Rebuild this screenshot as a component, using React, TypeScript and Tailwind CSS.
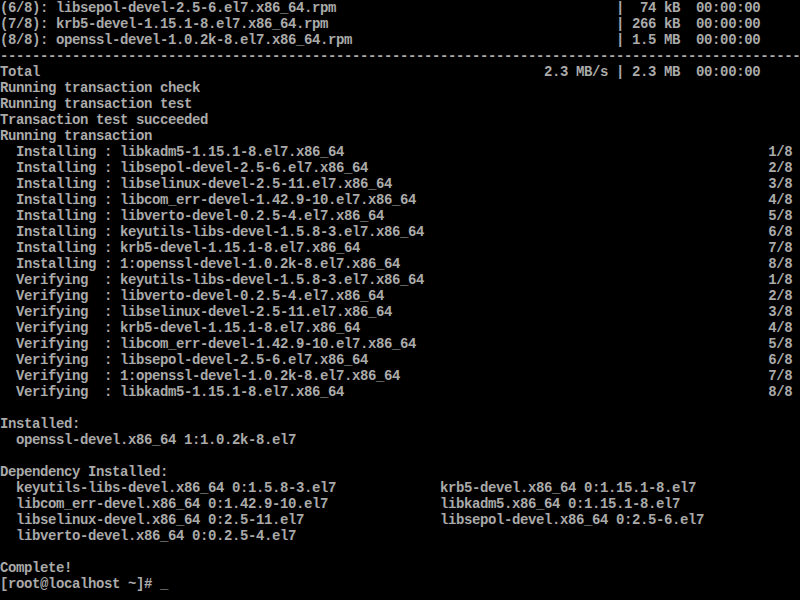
import React from "react";

const pkgs = [
  "libkadm5-1.15.1-8.el7.x86_64",
  "libsepol-devel-2.5-6.el7.x86_64",
  "libselinux-devel-2.5-11.el7.x86_64",
  "libcom_err-devel-1.42.9-10.el7.x86_64",
  "libverto-devel-0.2.5-4.el7.x86_64",
  "keyutils-libs-devel-1.5.8-3.el7.x86_64",
  "krb5-devel-1.15.1-8.el7.x86_64",
  "1:openssl-devel-1.0.2k-8.el7.x86_64",
];

const verified = [
  "keyutils-libs-devel-1.5.8-3.el7.x86_64",
  "libverto-devel-0.2.5-4.el7.x86_64",
  "libselinux-devel-2.5-11.el7.x86_64",
  "krb5-devel-1.15.1-8.el7.x86_64",
  "libcom_err-devel-1.42.9-10.el7.x86_64",
  "libsepol-devel-2.5-6.el7.x86_64",
  "1:openssl-devel-1.0.2k-8.el7.x86_64",
  "libkadm5-1.15.1-8.el7.x86_64",
];

const dl = (name: string, size: string) =>
  name.padEnd(77) + "| " + size.padStart(6) + "  00:00:00";

const lines: string[] = [
  dl("(6/8): libsepol-devel-2.5-6.el7.x86_64.rpm", "74 kB"),
  dl("(7/8): krb5-devel-1.15.1-8.el7.x86_64.rpm", "266 kB"),
  dl("(8/8): openssl-devel-1.0.2k-8.el7.x86_64.rpm", "1.5 MB"),
  "-".repeat(100),
  "Total".padEnd(68) + "2.3 MB/s | 2.3 MB  00:00:00",
  "Running transaction check",
  "Running transaction test",
  "Transaction test succeeded",
  "Running transaction",
  ...pkgs.map((p, i) => ("  Installing : " + p).padEnd(96) + `${i + 1}/8`),
  ...verified.map((p, i) => ("  Verifying  : " + p).padEnd(96) + `${i + 1}/8`),
  "",
  "Installed:",
  "  openssl-devel.x86_64 1:1.0.2k-8.el7",
  "",
  "Dependency Installed:",
  "  keyutils-libs-devel.x86_64 0:1.5.8-3.el7".padEnd(55) + "krb5-devel.x86_64 0:1.15.1-8.el7",
  "  libcom_err-devel.x86_64 0:1.42.9-10.el7".padEnd(55) + "libkadm5.x86_64 0:1.15.1-8.el7",
  "  libselinux-devel.x86_64 0:2.5-11.el7".padEnd(55) + "libsepol-devel.x86_64 0:2.5-6.el7",
  "  libverto-devel.x86_64 0:0.2.5-4.el7",
  "",
  "Complete!",
  "[root@localhost ~]# _",
];

export default function App() {
  return (
    <div className="w-[800px] h-[600px] bg-black overflow-hidden">
      <div className="font-['Liberation_Mono','DejaVu_Sans_Mono',monospace] font-bold text-[14px] tracking-[-0.4px] text-[#aaaaaa]">
        {lines.map((l, i) => (
          <div key={i} className="h-4 leading-4 whitespace-pre">
            {l}
          </div>
        ))}
      </div>
    </div>
  );
}
